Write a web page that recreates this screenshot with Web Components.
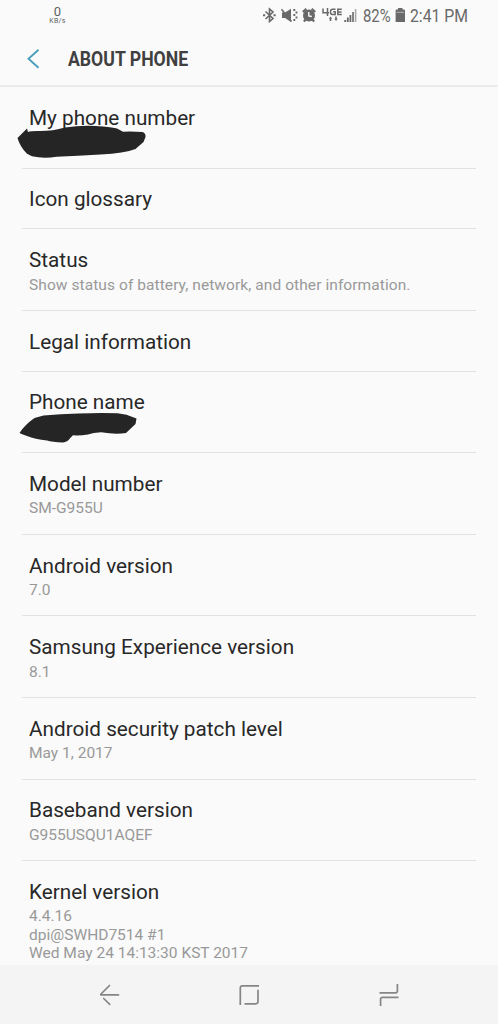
<!DOCTYPE html>
<html lang="en"><head><meta charset="utf-8"><title>About phone</title>
<style>html,body{margin:0;background:#fafafa}body{font-family:Roboto,"Liberation Sans",sans-serif}</style></head>
<body>
<about-screen></about-screen>
<script>
const define = (name, html, setup) => customElements.define(name, class extends HTMLElement {
  constructor() {
    super();
    const t = document.createElement('template');
    t.innerHTML = html;
    this.attachShadow({mode: 'open'}).appendChild(t.content.cloneNode(true));
  }
  connectedCallback() { if (setup) setup(this); }
});

define('status-bar', `
<style>
:host{display:flex;justify-content:space-between;height:32px;box-sizing:border-box;padding:0 30px 0 48px;color:#696969}
.rate{display:flex;flex-direction:column;align-items:center;width:19px;padding-top:4px;color:#606060}
.rate b{font:400 13px/15px Roboto,sans-serif}.rate small{font:400 7px/7px Roboto,sans-serif;letter-spacing:.3px;margin-top:-1px}
.right{display:flex;align-items:center;font-size:17.500px;line-height:32px;white-space:nowrap}
svg{display:block;flex:none}.pct{width:29px;margin:0 3px 0 5px}.time{width:58px;margin-left:4px}
span span{display:inline-block;transform-origin:0 50%}.pct span{transform:scaleX(.85)}.time span{transform:scaleX(.9)}
</style>
<div class="rate"><b>0</b><small>KB/s</small></div>
<div class="right">
<svg width="96" height="32" viewBox="0 0 96 32" fill="none" stroke="#696969">
 <path d="M3.500 11.500 11 18.500 7.500 21.500V9l3.500 3-7.500 7" stroke-width="1.600"/><path d="M1 15.300h2.200M11.500 15.300h2.200" stroke-width="2"/>
 <path d="M20 12.500h3l6-3.700v13.200l-6-4h-3z" fill="#696969" stroke="none"/><path d="M19.500 9.300 29.500 21.500" stroke-width="1.500"/><path d="M32.300 9v2M34.500 11.500v2M32.300 14v2M34.500 16.500v2M32.300 19v2" stroke-width="1.900"/>
 <circle cx="47" cy="15.500" r="6" fill="#696969" stroke="none"/><path d="M40.800 12l3.500-3.200M53.200 12l-3.500-3.200M41.800 21.500l2-2M52.200 21.500l-2-2" stroke-width="2.200"/><path d="M46.800 12V16l3 .5" stroke="#fafafa" stroke-width="1.400"/>
 <path d="M61 8.500v4.200h6M65.500 8v8M73.500 9.300h-3q-2 0-2 2.600 0 2.500 2 2.500h2.700v-2.600h-2M79.800 9.300h-4v5.100h4M76 11.900h3.500" stroke-width="1.500"/>
 <path d="M66.800 18.800l1.700-2.300 1.700 2.300h-.9v2.200h-1.600v-2.200zM72.300 18.700h.9v-2.200h1.600v2.200h.9l-1.700 2.300z" fill="#696969" stroke="none"/>
 <path d="M83.200 22v-2M85.800 22v-4.500M88.400 22v-7" stroke-width="1.800"/><path d="M91 22V12" stroke-width="1.800" stroke="#777"/><path d="M93.600 22V9" stroke-width="1.600" stroke="#aaa"/>
</svg>
<span class="pct"><span>82%</span></span>
<svg width="11" height="32" viewBox="0 0 11 32"><path d="M3 8h4.500v1.500H9q1 0 1 1V22H.6V10.500q0-1 1-1H3z" fill="#696969"/><path d="M1.500 12.300h7.600" stroke="#b5b5b5"/></svg>
<span class="time"><span>2:41 PM</span></span>
</div>`);

define('page-header', `
<style>
:host{display:flex;align-items:center;border-bottom:2px solid #ececec;padding-left:27px;box-sizing:border-box;height:55px}
svg{display:block;width:13px;height:20px;margin-right:28px}
h1{margin:0;font:700 20.600px/24px Roboto,sans-serif;color:#404040;transform:scaleX(.857);transform-origin:0 50%;white-space:nowrap}
</style>
<svg viewBox="0 0 13 20" fill="none" stroke="#4a9fbb" stroke-width="1.900"><path d="M11.500 .7 1.500 9.700l10 9"/></svg><h1><slot></slot></h1>`);

define('info-row', `
<style>
:host{display:block;position:relative;box-sizing:border-box;height:81.600px;margin:0 22px;padding:18.800px 7px 0;border-bottom:1px solid #e2e2e2;white-space:nowrap}
:host([single]){height:60.700px}:host([last]){height:110px;border:0}
.t{font-size:20.720px;line-height:24px;color:#282828;display:block}
.s{font-size:15.520px;line-height:18.300px;color:#999;margin-top:3.500px;white-space:pre-line}
:host([wide]) .s{letter-spacing:.07px}
</style>
<span class="t"></span><div class="s"><slot></slot></div>`, el => {
  el.shadowRoot.querySelector('.t').textContent = el.getAttribute('label');
});

define('ink-mark', `
<style>:host{position:absolute;left:-7px;top:34px;display:block;white-space:normal}svg{display:block}</style>
<svg width="135" height="44" viewBox="15 121 135 44" fill="#252525"><path></path></svg>`, el => {
  el.shadowRoot.querySelector('path').setAttribute('d', el.getAttribute('shape'));
});

define('nav-bar', `
<style>:host{display:flex;justify-content:space-between;position:absolute;left:0;right:0;bottom:0;height:59px;box-sizing:border-box;padding:19px 98px 0 99px;background:#f4f4f4}svg{display:block}</style>
<svg width="22" height="22" viewBox="99 984 22 22" fill="none" stroke="#858585" stroke-width="1.700" stroke-linecap="round"><path d="M109.500 985.500l-8.500 8.500q-.8.900.6.900H118.500M103.700 998.500l6 5.800"/></svg>
<svg width="22" height="22" viewBox="239 984 22 22" fill="none" stroke="#858585" stroke-width="1.700"><path d="M240.300 1005V988q0-2.200 2.200-2.200H259M244.500 1003.800h11.300q2.200 0 2.200-2.200V989.800"/></svg>
<svg width="22" height="22" viewBox="378 984 22 22" fill="none" stroke="#858585" stroke-width="1.700"><path d="M379.500 992.800H395.500q1.900 0 1.900-1.900V984M398.500 997.300H382.500q-1.900 0-1.900 1.900V1006"/></svg>`);

define('about-screen', `
<style>:host{display:block;position:relative;width:498px;height:1024px;overflow:hidden;background:#fafafa}</style>
<status-bar></status-bar>
<page-header>ABOUT PHONE</page-header>
<info-row label="My phone number"><ink-mark shape="M17.500 138l9.500-9.500 1 3.500q3-1.200 12-1 13 0 25-3.500 19-3 38-1 10 1 14 2l6 3.200q8-.5 19 .2 4 .8 3.500 5l-2 5-8 7q-11 4.200-35 5.700-23 1.500-44 2.200-13 2.200-24.500-.5l-5-2.500q-7-7-9.500-15.800z"></ink-mark></info-row>
<info-row single label="Icon glossary"></info-row>
<info-row wide label="Status">Show status of battery, network, and other information.</info-row>
<info-row single label="Legal information"></info-row>
<info-row label="Phone name"><ink-mark shape="M19.500 148q5-8 15-15l9-2.500q17-1.500 35-2 22-1 39-.2l9 1.500 10 3.700-1 5.500-9.500 9q-10 1.800-25-.7-8 .5-13 2.200-8 1.200-15 .8l-3 3q-2.500 4-7 4.200-11-.3-16-2-12-1.500-20-4.500-6-2-7.500-3z"></ink-mark></info-row>
<info-row label="Model number">SM-G955U</info-row>
<info-row label="Android version">7.0</info-row>
<info-row label="Samsung Experience version">8.1</info-row>
<info-row label="Android security patch level">May 1, 2017</info-row>
<info-row label="Baseband version">G955USQU1AQEF</info-row>
<info-row last label="Kernel version">4.4.16
dpi@SWHD7514 #1
Wed May 24 14:13:30 KST 2017</info-row>
<nav-bar></nav-bar>`);
</script>
</body></html>
